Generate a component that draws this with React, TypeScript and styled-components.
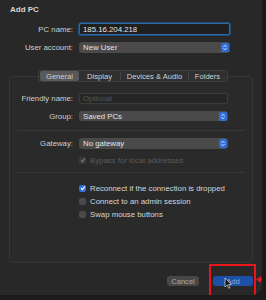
import React from "react";
import styled, { createGlobalStyle } from "styled-components";

const GlobalStyle = createGlobalStyle`
  html, body {
    margin: 0;
    padding: 0;
    background: #1b1b1b;
  }
  body {
    font-family: "Liberation Sans", Arial, sans-serif;
    -webkit-font-smoothing: antialiased;
  }
`;

const Sheet = styled.div`
  position: relative;
  width: 262px;
  height: 295px;
  box-sizing: border-box;
  background: #282828;
  border-bottom-right-radius: 9px;
  padding: 5px 0 0;
  overflow: hidden;
`;

const Title = styled.div`
  margin-left: 10px;
  font-size: 8px;
  line-height: 10px;
  font-weight: 700;
  color: #d6d6d6;
`;

const FormGrid = styled.div<{ $top: number; $field: number }>`
  display: grid;
  grid-template-columns: 64px ${(p) => p.$field}px;
  column-gap: 6px;
  row-gap: 7px;
  margin-top: ${(p) => p.$top}px;
  margin-left: 9px;
  align-items: center;
`;

const Label = styled.div`
  text-align: right;
  font-size: 7.8px;
  color: #cfcfcf;
  white-space: nowrap;
`;

const TextField = styled.div<{ $focus?: boolean; $h: number }>`
  box-sizing: border-box;
  height: ${(p) => p.$h}px;
  background: ${(p) => (p.$focus ? "#1f1f1f" : "#262626")};
  border: 1px solid ${(p) => (p.$focus ? "#2d6aa3" : "#3c3c3c")};
  box-shadow: ${(p) => (p.$focus ? "0 0 0 1px #1f4d78" : "none")};
  border-radius: 2px;
  padding-left: 3px;
  display: flex;
  align-items: center;
  font-size: 7.8px;
  color: #e2e2e2;
`;

const Placeholder = styled.span`
  color: #565656;
`;

const Popup = styled.div<{ $h: number }>`
  box-sizing: border-box;
  height: ${(p) => p.$h}px;
  background: #4a4a4a;
  border-radius: 3px;
  padding: 0 1px 0 4px;
  display: flex;
  align-items: center;
  justify-content: space-between;
  font-size: 7.8px;
  color: #e4e4e4;
`;

const Stepper = styled.div`
  width: 8px;
  height: 9px;
  border-radius: 2px;
  background: #2f6fdc;
  display: flex;
  align-items: center;
  justify-content: center;
`;

const TabsWrap = styled.div`
  position: relative;
  margin: 17px 9px 0;
`;

const Tabs = styled.div`
  position: relative;
  z-index: 1;
  display: flex;
  width: max-content;
  margin-left: 29px;
  height: 12px;
  box-sizing: border-box;
  border: 1px solid #3d3d3d;
  border-radius: 3px;
  background: #303030;
  padding: 0 1px;
  align-items: center;
`;

const Tab = styled.div<{ $active?: boolean; $w: number }>`
  width: ${(p) => p.$w}px;
  height: 10px;
  display: flex;
  align-items: center;
  justify-content: center;
  font-size: 7.6px;
  color: #d0d0d0;
  background: ${(p) => (p.$active ? "#595959" : "transparent")};
  border-radius: 2px;
  border-right: ${(p) => (p.$active ? "none" : "1px solid #444")};
  &:last-child {
    border-right: none;
  }
`;

const Panel = styled.div`
  margin-top: -6px;
  height: 187px;
  box-sizing: border-box;
  border: 1px solid #373737;
  border-radius: 4px;
  background: #2a2a2a;
  padding-top: 16px;
`;

const PanelGrid = styled(FormGrid)`
  margin-left: -1px;
`;

const Divider = styled.div<{ $top: number }>`
  height: 1px;
  background: #363636;
  margin: ${(p) => p.$top}px 7px 0;
`;

const CheckRow = styled.label<{ $dim?: boolean }>`
  display: flex;
  align-items: center;
  gap: 4px;
  margin-left: 69px;
  height: 8px;
  font-size: 7.8px;
  color: ${(p) => (p.$dim ? "#5b5b5b" : "#d6d6d6")};
`;

const Box = styled.span<{ $on?: boolean; $dim?: boolean }>`
  width: 7px;
  height: 7px;
  box-sizing: border-box;
  border-radius: 2px;
  background: ${(p) => (p.$dim ? "#3a3a3a" : p.$on ? "#2f6fdc" : "#4a4a4a")};
  display: flex;
  align-items: center;
  justify-content: center;
`;

const CheckList = styled.div<{ $top: number }>`
  display: flex;
  flex-direction: column;
  gap: 5px;
  margin-top: ${(p) => p.$top}px;
`;

const Footer = styled.div`
  display: flex;
  justify-content: flex-end;
  gap: 14px;
  margin: 13px 9px 0 0;
`;

const Button = styled.div<{ $primary?: boolean; $w: number }>`
  width: ${(p) => p.$w}px;
  height: 10px;
  border-radius: 3px;
  display: flex;
  align-items: center;
  justify-content: center;
  font-size: 7.6px;
  background: ${(p) => (p.$primary ? "#1c4fa6" : "#474747")};
  color: ${(p) => (p.$primary ? "#8fa9d6" : "#a9a9a9")};
`;

const Highlight = styled.div`
  position: absolute;
  left: 209px;
  top: 264px;
  width: 47px;
  height: 40px;
  box-sizing: border-box;
  border: 2px solid #e8161b;
`;

const Arrow = styled.svg`
  position: absolute;
  left: 256px;
  top: 275px;
`;

const Cursor = styled.svg`
  position: absolute;
  left: 224px;
  top: 277px;
`;

const Chevrons = () => (
  <svg width="6" height="7" viewBox="0 0 6 7">
    <path d="M1.5 2.8 L3 1.3 L4.5 2.8 M1.5 4.2 L3 5.7 L4.5 4.2" stroke="#fff" strokeWidth="0.9" fill="none" />
  </svg>
);

const Tick = ({ color }: { color: string }) => (
  <svg width="6" height="6" viewBox="0 0 6 6">
    <path d="M1 3.1 L2.4 4.6 L5 1.4" stroke={color} strokeWidth="1.1" fill="none" />
  </svg>
);

export default function App() {
  return (
    <>
      <GlobalStyle />
      <Sheet>
        <Title>Add PC</Title>
        <FormGrid $top={8} $field={151}>
          <Label>PC name:</Label>
          <TextField $focus $h={12}>185.16.204.218</TextField>
          <Label>User account:</Label>
          <Popup $h={11}>
            New User
            <Stepper>
              <Chevrons />
            </Stepper>
          </Popup>
        </FormGrid>

        <TabsWrap>
          <Tabs>
            <Tab $active $w={39}>General</Tab>
            <Tab $w={41}>Display</Tab>
            <Tab $w={67}>Devices &amp; Audio</Tab>
            <Tab $w={37}>Folders</Tab>
          </Tabs>
          <Panel>
            <PanelGrid $top={0} $field={149}>
              <Label>Friendly name:</Label>
              <TextField $h={11}>
                <Placeholder>Optional</Placeholder>
              </TextField>
              <Label>Group:</Label>
              <Popup $h={10}>
                Saved PCs
                <Stepper>
                  <Chevrons />
                </Stepper>
              </Popup>
            </PanelGrid>
            <Divider $top={9} />
            <PanelGrid $top={7} $field={149}>
              <Label>Gateway:</Label>
              <Popup $h={11}>
                No gateway
                <Stepper>
                  <Chevrons />
                </Stepper>
              </Popup>
            </PanelGrid>
            <CheckList $top={7}>
              <CheckRow $dim>
                <Box $dim>
                  <Tick color="#777" />
                </Box>
                Bypass for local addresses
              </CheckRow>
            </CheckList>
            <Divider $top={8} />
            <CheckList $top={11}>
              <CheckRow>
                <Box $on>
                  <Tick color="#fff" />
                </Box>
                Reconnect if the connection is dropped
              </CheckRow>
              <CheckRow>
                <Box />
                Connect to an admin session
              </CheckRow>
              <CheckRow>
                <Box />
                Swap mouse buttons
              </CheckRow>
            </CheckList>
          </Panel>
        </TabsWrap>

        <Footer>
          <Button $w={32}>Cancel</Button>
          <Button $primary $w={40}>Add</Button>
        </Footer>

        <Highlight />
        <Arrow width="10" height="9" viewBox="0 0 10 9">
          <path d="M0 4.5 L5 1 L5 8 Z" fill="#e8161b" />
          <rect x="4" y="3.6" width="6" height="1.8" fill="#e8161b" />
        </Arrow>
        <Cursor width="8" height="12" viewBox="0 0 8 12">
          <path d="M1 1 L1 10 L3.2 8 L4.8 11.3 L6 10.7 L4.5 7.6 L7.3 7.5 Z" fill="#111" stroke="#ddd" strokeWidth="0.7" />
        </Cursor>
      </Sheet>
    </>
  );
}
